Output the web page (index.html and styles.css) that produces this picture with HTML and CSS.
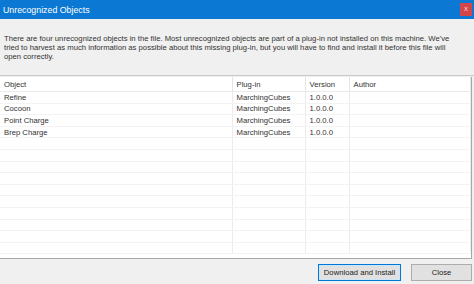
FILE: index.html
```html
<!DOCTYPE html>
<html>
<head>
<meta charset="utf-8">
<link rel="stylesheet" href="styles.css">
</head>
<body>
<div class="window">
  <div class="titlebar">
    <span class="title">Unrecognized Objects</span>
    <span class="close">x</span>
  </div>
  <div class="message">There are four unrecognized objects in the file. Most unrecognized objects are part of a plug-in not installed on this machine. We've<br>tried to harvest as much information as possible about this missing plug-in, but you will have to find and install it before this file will<br>open correctly.</div>
  <div class="list">
    <table>
      <colgroup><col class="c1"><col class="c2"><col class="c3"><col class="c4"></colgroup>
      <thead><tr><th>Object</th><th>Plug-in</th><th>Version</th><th>Author</th></tr></thead>
      <tbody>
        <tr><td>Refine</td><td>MarchingCubes</td><td>1.0.0.0</td><td></td></tr>
        <tr><td>Cocoon</td><td>MarchingCubes</td><td>1.0.0.0</td><td></td></tr>
        <tr><td>Point Charge</td><td>MarchingCubes</td><td>1.0.0.0</td><td></td></tr>
        <tr><td>Brep Charge</td><td>MarchingCubes</td><td>1.0.0.0</td><td></td></tr>
        <tr><td></td><td></td><td></td><td></td></tr>
        <tr><td></td><td></td><td></td><td></td></tr>
        <tr><td></td><td></td><td></td><td></td></tr>
        <tr><td></td><td></td><td></td><td></td></tr>
        <tr><td></td><td></td><td></td><td></td></tr>
        <tr><td></td><td></td><td></td><td></td></tr>
        <tr><td></td><td></td><td></td><td></td></tr>
        <tr><td></td><td></td><td></td><td></td></tr>
        <tr><td></td><td></td><td></td><td></td></tr>
        <tr><td></td><td></td><td></td><td></td></tr>
      </tbody>
    </table>
  </div>
  <div class="footer">
    <button class="btn primary">Download and Install</button>
    <button class="btn">Close</button>
  </div>
</div>
</body>
</html>
```
FILE: styles.css
```css
html, body {
  margin: 0;
  padding: 0;
}
body {
  font-family: "Liberation Sans", Arial, sans-serif;
  color: #222;
  background: #f0f0f0;
}
.window {
  width: 474px;
  height: 284px;
  display: flex;
  flex-direction: column;
  background: #f0f0f0;
  overflow: hidden;
}
.titlebar {
  height: 19px;
  flex: none;
  background: #0b78d3;
  display: flex;
  align-items: center;
  justify-content: space-between;
  padding: 0 2px 0 3px;
}
.title {
  color: #fff;
  font-size: 8.8px;
}
.close {
  width: 12px;
  height: 13px;
  background: #d2464a;
  color: #f4d0d0;
  font-size: 8px;
  line-height: 12px;
  text-align: center;
}
.message {
  flex: none;
  height: 57px;
  box-sizing: border-box;
  padding: 15px 2px 0 4px;
  font-size: 7.7px;
  line-height: 9.2px;
  color: #333;
  white-space: nowrap;
  border-bottom: 1px solid #c8c8c8;
}
.list {
  flex: none;
  height: 181px;
  margin: 1px 2px 0 0;
  background: #fff;
  border-right: 1px solid #a8a8a8;
  border-bottom: 1px solid #a8a8a8;
  overflow: hidden;
}
table {
  width: 100%;
  border-collapse: collapse;
  table-layout: fixed;
  font-size: 7.7px;
  color: #333;
}
col.c1 { width: 232px; }
col.c2 { width: 73px; }
col.c3 { width: 44px; }
th, td {
  text-align: left;
  font-weight: normal;
  padding: 0 0 0 4px;
  white-space: nowrap;
  border-right: 1px solid #ececec;
  border-bottom: 1px solid #f3f3f3;
}
th {
  height: 14px;
  border-right: 1px solid #e4e4e4;
  border-bottom: 1px solid #eaeaea;
}
td {
  height: 10.6px;
}
.footer {
  flex: 1;
  display: flex;
  justify-content: flex-end;
  align-items: flex-start;
  gap: 10px;
  padding: 5px 2px 0 0;
}
.btn {
  font-family: inherit;
  font-size: 7.7px;
  color: #222;
  height: 17px;
  padding: 0;
  background: #e1e1e1;
  border: 1px solid #adadad;
}
.btn.primary {
  width: 83px;
  border: 1px solid #0078d7;
  box-shadow: inset 0 0 0 1px #cde6f7;
}
.btn:not(.primary) {
  width: 61px;
}
```
